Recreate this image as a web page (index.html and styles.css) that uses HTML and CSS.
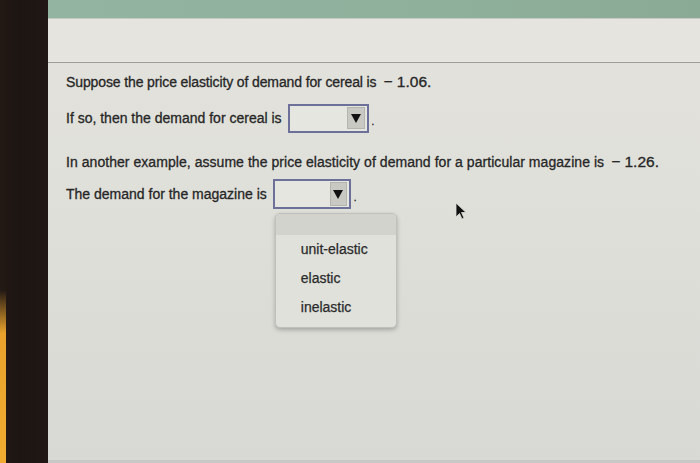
FILE: index.html
```html
<!DOCTYPE html>
<html>
<head>
<meta charset="utf-8">
<link rel="stylesheet" href="styles.css">
</head>
<body>
<div class="frame">
  <div class="bezel"><div class="orange"></div></div>
  <div class="screen">
    <div class="topbar"></div>
    <div class="band"></div>
    <div class="content">
      <div class="row r1">Suppose the price elasticity of demand for cereal is <span class="num">&minus; 1.06.</span></div>
      <div class="row r2">
        <span>If so, then the demand for cereal is</span>
        <span class="select s1"><span class="btn"><svg width="10" height="10" viewBox="0 0 10 10"><path d="M0 1 H10 L5 10 Z" fill="#111"/></svg></span></span>
        <span class="dot">.</span>
      </div>
      <div class="row r3">In another example, assume the price elasticity of demand for a particular magazine is <span class="num">&minus; 1.26.</span></div>
      <div class="row r4">
        <span>The demand for the magazine is</span>
        <span class="select s2"><span class="btn"><svg width="10" height="10" viewBox="0 0 10 10"><path d="M0 1 H10 L5 10 Z" fill="#111"/></svg></span>
          <div class="menu">
            <div class="menu-blank"></div>
            <div class="item">unit-elastic</div>
            <div class="item">elastic</div>
            <div class="item">inelastic</div>
          </div>
        </span>
        <span class="dot">.</span>
      </div>
    </div>
    <svg class="cursor" width="16" height="20" viewBox="0 0 16 20"><path d="M2 1 L2 15 L5.5 11.5 L8 17 L10 16 L7.5 10.5 L12 10.5 Z" fill="#111" stroke="#e0e0dc" stroke-width="0.8"/></svg>
  </div>
</div>
</body>
</html>
```
FILE: styles.css
```css
html, body {
  margin: 0;
  padding: 0;
  width: 700px;
  height: 463px;
  overflow: hidden;
}
body {
  font-family: "Liberation Sans", Arial, sans-serif;
  background: #d6d6d2;
}
.frame {
  display: flex;
  width: 700px;
  height: 463px;
}
.bezel {
  width: 48px;
  flex: none;
  background: linear-gradient(90deg, #231915 0%, #1c1512 40%, #211815 100%);
  position: relative;
}
.orange {
  position: absolute;
  left: 0;
  top: 290px;
  bottom: 0;
  width: 6px;
  background: linear-gradient(180deg, rgba(230,160,40,0) 0%, #e8a22c 25%, #f0ac30 100%);
}
.screen {
  flex: 1;
  position: relative;
  display: flex;
  flex-direction: column;
  background: linear-gradient(180deg, #e3e2dc 0%, #e0e0da 40%, #d8d8d4 100%);
  border-bottom: 3px solid #c8c8c6;
}
.topbar {
  height: 18px;
  background: linear-gradient(90deg, #92b4a0 0%, #8fb09b 60%, #8aaa96 100%);
  flex: none;
}
.band {
  height: 43px;
  flex: none;
  background: #e5e4de;
  border-top: 1px solid #c5cbc3;
  border-bottom: 1px solid #9d9e9a;
}
.content {
  padding: 11px 0 0 18px;
  color: #262626;
  font-size: 14px;
  -webkit-text-stroke: 0.3px #262626;
}
.row {
  display: flex;
  align-items: center;
  white-space: nowrap;
}
.num { margin-left: 7px; font-size: 15.5px; letter-spacing: 0; }
.r1 { height: 16px; letter-spacing: -0.12px; }
.r2 { height: 28px; margin-top: 14px; }
.r3 { height: 16px; margin-top: 22px; letter-spacing: 0.05px; }
.r4 { height: 30px; margin-top: 9px; }
.select {
  position: relative;
  box-sizing: border-box;
  border: 2px solid #6d7199;
  background: #e6e6e1;
  display: flex;
  justify-content: flex-end;
  align-items: center;
  padding-right: 2px;
  -webkit-text-stroke: 0;
}
.s1 { width: 81px; height: 29px; margin-left: 6px; }
.s2 { width: 78px; height: 30px; margin-left: 6px; }
.btn {
  width: 18px;
  height: 22px;
  background: #c9c9c4;
  border: 1px solid #b5b5b0;
  box-sizing: border-box;
  display: flex;
  align-items: center;
  justify-content: center;
}
.s2 .btn { height: 24px; width: 17px; }
.dot { margin-left: 3px; font-size: 10px; padding-top: 6px; }
.menu {
  position: absolute;
  left: 0;
  top: 32px;
  width: 122px;
  height: 115px;
  box-sizing: border-box;
  border: 1px solid #c0c0bc;
  border-radius: 5px;
  background: #e1e1dc;
  box-shadow: 0 2px 4px rgba(0,0,0,0.25);
  overflow: hidden;
  -webkit-text-stroke: 0.25px #2a2a2a;
}
.menu-blank {
  height: 21px;
  background: #d3d3ce;
}
.item {
  padding-left: 25px;
  height: 29px;
  line-height: 29px;
  font-size: 14px;
  color: #2a2a2a;
}
.item:first-of-type { margin-top: 2px; }
.cursor {
  position: absolute;
  left: 406px;
  top: 202px;
}
```
